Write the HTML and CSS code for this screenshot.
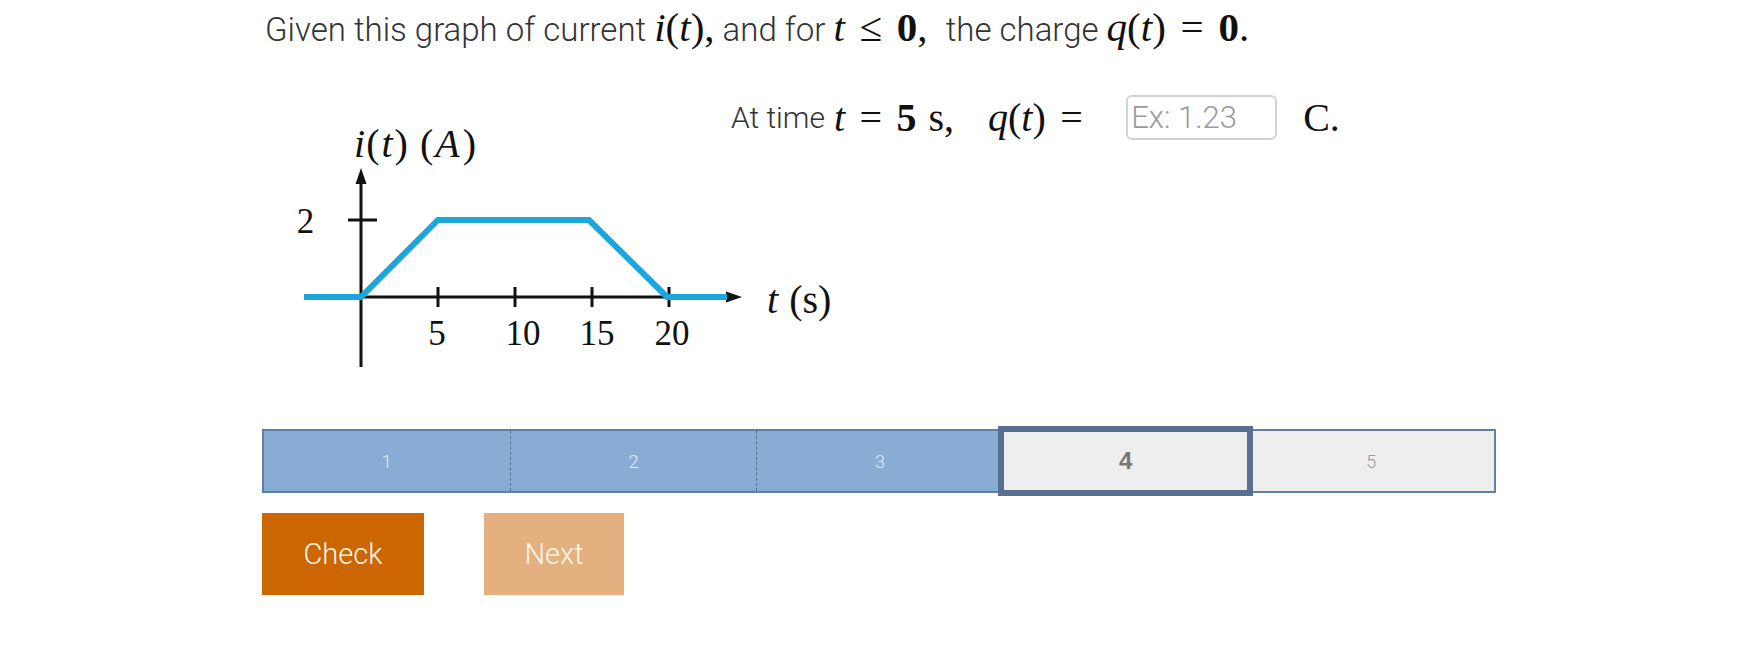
FILE: index.html
```html
<!DOCTYPE html>
<html lang="en">
<head>
<meta charset="utf-8">
<title>Charge from current graph</title>
<link rel="stylesheet" href="styles.css">
</head>
<body>
<div class="page">
  <p class="title">Given this graph of current <span class="m"><i>i</i>(<i>t</i>),</span> and for <span class="m"><i>t</i><span class="rel">≤</span><b>0</b>,</span> <span class="sp">the charge</span> <span class="m"><i>q</i>(<i>t</i>)<span class="rel">=</span><b>0</b>.</span></p>

  <div class="problem">
    <div class="figure">
      <svg class="graph" width="470" height="295" viewBox="0 0 470 295" xmlns="http://www.w3.org/2000/svg">
        <text class="lbl" x="92" y="72"><tspan font-style="italic">i</tspan><tspan dx="1">(</tspan><tspan font-style="italic" dx="2">t</tspan><tspan dx="2">)</tspan><tspan dx="12">(</tspan><tspan font-style="italic" dx="2">A</tspan><tspan dx="3">)</tspan></text>
        <!-- y axis -->
        <line x1="99" y1="95" x2="99" y2="282" stroke="#111" stroke-width="3"/>
        <polygon points="99,83 93.5,99 104.5,99" fill="#111"/>
        <line x1="86" y1="135" x2="115" y2="135" stroke="#111" stroke-width="3"/>
        <text class="num" x="43.5" y="148" text-anchor="middle">2</text>
        <!-- x axis -->
        <line x1="99" y1="212" x2="467" y2="212" stroke="#111" stroke-width="3"/>
        <polygon points="480,212 464,206.5 464,217.5" fill="#111"/>
        <line x1="176" y1="202" x2="176" y2="222" stroke="#111" stroke-width="3"/>
        <line x1="253" y1="202" x2="253" y2="222" stroke="#111" stroke-width="3"/>
        <line x1="330" y1="202" x2="330" y2="222" stroke="#111" stroke-width="3"/>
        <line x1="407" y1="202" x2="407" y2="222" stroke="#111" stroke-width="3"/>
        <text class="num" x="175" y="260" text-anchor="middle">5</text>
        <text class="num" x="261" y="260" text-anchor="middle">10</text>
        <text class="num" x="335" y="260" text-anchor="middle">15</text>
        <text class="num" x="410" y="260" text-anchor="middle">20</text>
        <!-- current -->
        <polyline points="42,212 99,212 176,135 327,135 405,212 465,212" fill="none" stroke="#1ba6dc" stroke-width="6" stroke-linejoin="miter"/>
        <text class="lbl" x="505" y="228"><tspan font-style="italic">t</tspan><tspan dx="11">(s)</tspan></text>
      </svg>
    </div>
    <div class="question">
      <span class="txt">At time</span>
      <span class="m"><i>t</i><span class="rel">=</span><b>5</b><span class="thin">s</span>,</span>
      <span class="m gap"><i>q</i>(<i>t</i>)<span class="rel">=</span></span>
      <input class="answer" type="text" placeholder="Ex: 1.23">
      <span class="m unit">C.</span>
    </div>
  </div>

  <div class="progress">
    <div class="seg done">1</div>
    <div class="seg done dashed">2</div>
    <div class="seg done dashed">3</div>
    <div class="seg current">4</div>
    <div class="seg todo">5</div>
  </div>

  <div class="actions">
    <button class="btn check">Check</button>
    <button class="btn next">Next</button>
  </div>
</div>
</body>
</html>
```

FILE: styles.css
```css
html, body {
  margin: 0;
  padding: 0;
  background: #ffffff;
}

.page {
  width: 1234px;
  margin-left: 262px;
  font-family: Roboto, "Liberation Sans", sans-serif;
  font-weight: 300;
  color: #333333;
}

.title {
  margin: 0;
  height: 54px;
  line-height: 54px;
  font-size: 33px;
  padding-left: 3px;
  white-space: nowrap;
}

.title .m {
  font-size: 41px;
}

.title .sp {
  margin-left: 10px;
}

.m {
  font-family: "Liberation Serif", "DejaVu Serif", serif;
  font-weight: 400;
  color: #111111;
  font-size: 40px;
}

.m i {
  font-style: italic;
}

.m b {
  font-weight: 700;
}

.rel {
  margin: 0 0.36em;
}

.thin {
  margin-left: 0.3em;
}

.problem {
  display: flex;
  margin-top: 31px;
  height: 295px;
}

.figure {
  width: 469px;
  flex: 0 0 469px;
}

.graph {
  display: block;
  overflow: visible;
}

.graph .lbl {
  font-family: "Liberation Serif", "DejaVu Serif", serif;
  font-size: 40px;
  fill: #111111;
}

.graph .num {
  font-family: "Liberation Serif", "DejaVu Serif", serif;
  font-size: 35px;
  fill: #111111;
}

.question {
  display: flex;
  align-items: center;
  height: 64px;
  font-size: 30px;
  white-space: nowrap;
}

.question .m {
  font-size: 40px;
  margin-left: 9px;
}

.question .gap {
  margin-left: 34px;
}

.answer {
  box-sizing: border-box;
  width: 151px;
  height: 45px;
  margin-left: 29px;
  border: 2px solid #cfd3d6;
  border-radius: 6px;
  padding: 0 3px;
  font-family: Roboto, "Liberation Sans", sans-serif;
  font-weight: 300;
  font-size: 31px;
  color: #333333;
  background: #ffffff;
}

.answer::placeholder {
  color: #9a9a9a;
}

.question .unit {
  margin-left: 26px;
}

.progress {
  display: flex;
  box-sizing: border-box;
  height: 64px;
  border: 2px solid #5f7fa3;
  margin-top: 49px;
}

.seg {
  flex: 1 1 0;
  display: flex;
  align-items: center;
  justify-content: center;
  font-size: 18px;
}

.seg.done {
  background: #88acd3;
  color: #e6eef7;
}

.seg.dashed {
  border-left: 1px dashed #4f6f93;
}

.seg.current {
  position: relative;
  z-index: 1;
  background: #eeeeee;
  outline: 6px solid #586f91;
  outline-offset: -1px;
  font-family: "Liberation Sans", Arial, sans-serif;
  font-weight: 700;
  font-size: 24px;
  color: #777777;
}

.seg.todo {
  background: #eeeeee;
  color: #9a9a9a;
}

.actions {
  display: flex;
  gap: 60px;
  margin-top: 20px;
}

.btn {
  height: 82px;
  border: none;
  padding: 0;
  font-family: Roboto, "Liberation Sans", sans-serif;
  font-weight: 300;
  font-size: 29px;
  color: #fff8ee;
}

.btn.check {
  width: 162px;
  background: #cc6600;
}

.btn.next {
  width: 140px;
  background: #e5b07f;
}
```
